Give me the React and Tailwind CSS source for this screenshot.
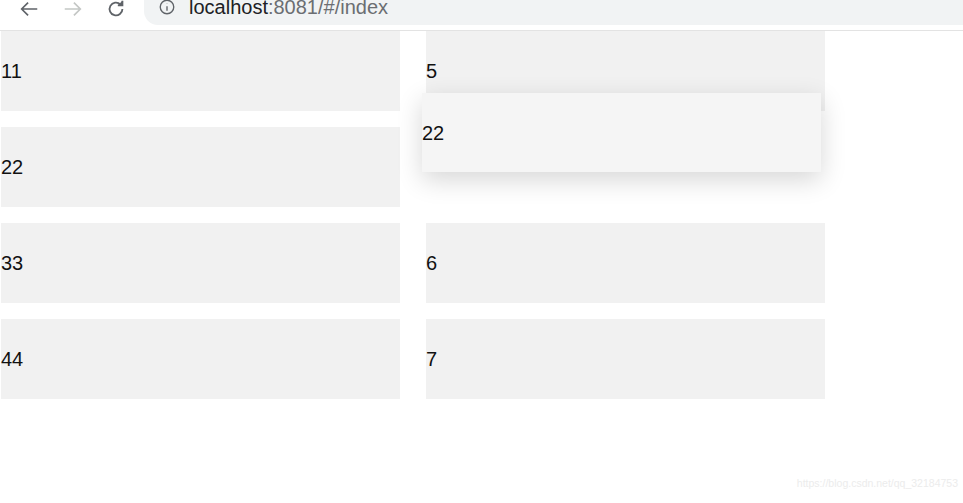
import React from "react";

function Box({ label, hidden }) {
  return (
    <div
      className={
        "h-[80px] flex items-center text-[20px] text-[#111] " +
        (hidden ? "bg-transparent" : "bg-[#f1f1f1]")
      }
    >
      {hidden ? null : <span>{label}</span>}
    </div>
  );
}

export default function App() {
  const left = ["11", "22", "33", "44"];
  const right = ["5", null, "6", "7"];
  return (
    <div
      className="relative w-[963px] h-[503px] bg-white overflow-hidden"
      style={{ fontFamily: '"Liberation Sans", Arial, sans-serif' }}
    >
      {/* browser toolbar */}
      <div className="h-[31px] flex items-start border-b border-[#e3e3e3] bg-white overflow-hidden">
        <div className="flex items-center h-[18px]">
          <svg className="ml-[18px]" width="22" height="22" viewBox="0 0 24 24" fill="none" stroke="#5f6368" strokeWidth="1.8">
            <path d="M21 12H4M11 5l-7 7 7 7" />
          </svg>
          <svg className="ml-[22px]" width="22" height="22" viewBox="0 0 24 24" fill="none" stroke="#c4c7c5" strokeWidth="1.8">
            <path d="M3 12h17M13 5l7 7-7 7" />
          </svg>
          <svg className="ml-[21px]" width="22" height="22" viewBox="0 0 24 24" fill="none" stroke="#5f6368" strokeWidth="2">
            <path d="M19 12a7 7 0 1 1-2.2-5.1" />
            <path d="M19 3v5h-5" fill="#5f6368" />
          </svg>
        </div>
        <div className="ml-[17px] flex-1 h-[25px] bg-[#f1f3f4] rounded-bl-[14px] flex items-start">
          <svg className="ml-[14px] -mt-[2px]" width="18" height="18" viewBox="0 0 24 24" fill="none" stroke="#5f6368" strokeWidth="1.8">
            <circle cx="12" cy="12" r="9" />
            <path d="M12 11v6M12 7.5v.5" />
          </svg>
          <span className="ml-[13px] text-[20px] leading-[20px] -mt-[3px] text-[#202124]">
            localhost<span className="text-[#6b6e72]">:8081/#/index</span>
          </span>
        </div>
      </div>

      {/* grid */}
      <div className="ml-[1px] flex gap-[26px]">
        <div className="w-[399px] flex flex-col gap-[16px]">
          {left.map((l) => (
            <Box key={l} label={l} />
          ))}
        </div>
        <div className="w-[399px] flex flex-col gap-[16px]">
          {right.map((r, i) => (
            <Box key={i} label={r} hidden={r === null} />
          ))}
        </div>
      </div>

      {/* dragged item */}
      <div className="absolute left-[422px] top-[93px] w-[399px] h-[79px] bg-[#f5f5f5] flex items-center text-[20px] text-[#111] shadow-[0_8px_24px_rgba(0,0,0,0.16)]">
        <span>22</span>
      </div>

      {/* watermark */}
      <div className="absolute right-[5px] bottom-[11px] text-[10.5px] text-[#ececec]">
        https://blog.csdn.net/qq_32184753
      </div>
    </div>
  );
}
